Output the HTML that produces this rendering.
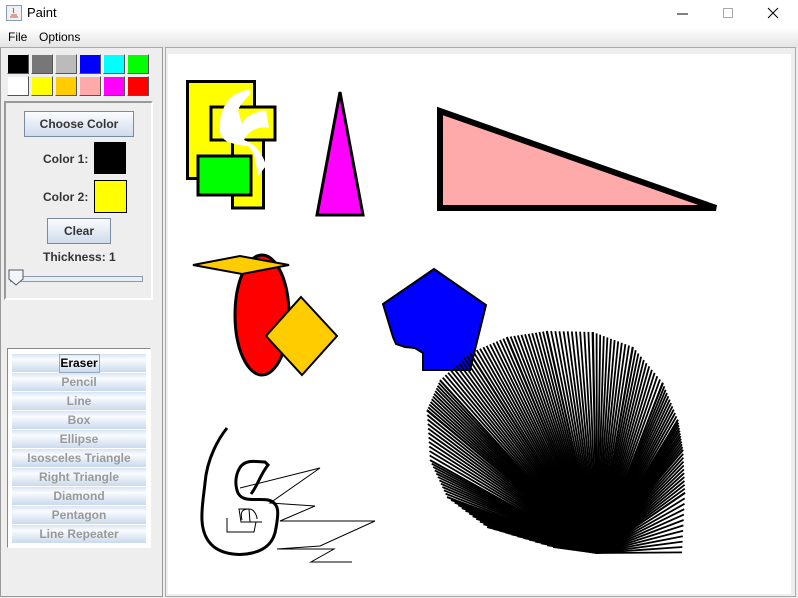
<!DOCTYPE html>
<html><head><meta charset="utf-8"><style>
body{margin:0;width:798px;height:598px;overflow:hidden;background:#eeeeee;font-family:"Liberation Sans",sans-serif;position:relative}
.a{position:absolute}
.title{left:0;top:0;width:798px;height:30px;background:#fff;border-bottom:0}
.menu{left:0;top:27px;width:798px;height:21px;background:linear-gradient(#fff,#e3e3e3)}
.sw{position:absolute;width:20px;height:18px;border:1px solid;border-color:#eee #555 #555 #eee}
.btn{position:absolute;background:linear-gradient(#fbfcfe,#cfdcec);border:1px solid #7a8aa0;font-size:12px;font-weight:bold;color:#333;text-align:center}
.tool{position:absolute;left:12px;width:134px;height:18px;background:linear-gradient(#d7e3f2,#fafcff 30%,#c9d9ec);font-size:12px;font-weight:bold;color:#999;text-align:center;line-height:18px}
.lbl{position:absolute;font-size:12px;font-weight:bold;color:#333}
</style></head><body>
<div class="a title"></div>
<svg class="a" style="left:6px;top:5px" width="16" height="16"><rect x="0.5" y="0.5" width="15" height="15" fill="#eef2f8" stroke="#8a9ab0"/><path d="M4 12h8M5 10h6M7 3c2 2-1 3 1 5" stroke="#d4502a" fill="none"/></svg>
<div class="a" style="left:27px;top:5px;font-size:13px;color:#000">Paint</div>
<svg class="a" style="left:670px;top:5px" width="120" height="18"><path d="M7 9h11" stroke="#000"/><rect x="53.5" y="3.5" width="9" height="9" fill="none" stroke="#aaa"/><path d="M98 3l10 10M108 3l-10 10" stroke="#000"/></svg>
<div class="a menu"></div>
<div class="a" style="left:8px;top:30px;font-size:12px">File</div>
<div class="a" style="left:39px;top:30px;font-size:12px">Options</div>
<div class="a" style="left:0;top:47px;width:163px;height:550px;border:1px solid #999;border-top:1px solid #aaa;box-sizing:border-box"></div>
<div class="a" style="left:165px;top:47px;width:631px;height:550px;border:1px solid #aaa;box-sizing:border-box"></div>
<div class="a" style="left:168px;top:54px;width:623px;height:540px;background:#fff"></div>
<div class="sw" style="left:7px;top:54px;background:#000"></div>
<div class="sw" style="left:31px;top:54px;background:#777"></div>
<div class="sw" style="left:55px;top:54px;background:#bbb"></div>
<div class="sw" style="left:79px;top:54px;background:#00f"></div>
<div class="sw" style="left:103px;top:54px;background:#0ff"></div>
<div class="sw" style="left:127px;top:54px;background:#0f0"></div>
<div class="sw" style="left:7px;top:76px;background:#fff"></div>
<div class="sw" style="left:31px;top:76px;background:#ff0"></div>
<div class="sw" style="left:55px;top:76px;background:#fc0"></div>
<div class="sw" style="left:79px;top:76px;background:#faa"></div>
<div class="sw" style="left:103px;top:76px;background:#f0f"></div>
<div class="sw" style="left:127px;top:76px;background:#f00"></div>
<div class="a" style="left:4px;top:101px;width:149px;height:199px;border:2px solid #999;border-right-color:#fff;border-bottom-color:#fff;box-sizing:border-box"></div>
<div class="btn" style="left:24px;top:111px;width:108px;height:24px;line-height:24px">Choose Color</div>
<div class="lbl" style="left:43px;top:152px">Color 1:</div>
<div class="a" style="left:94px;top:142px;width:32px;height:32px;background:#000"></div>
<div class="lbl" style="left:43px;top:190px">Color 2:</div>
<div class="a" style="left:94px;top:180px;background:#ff0;border:1px solid #000;box-sizing:border-box;width:33px;height:33px"></div>
<div class="btn" style="left:47px;top:218px;width:62px;height:24px;line-height:24px">Clear</div>
<div class="lbl" style="left:43px;top:250px">Thickness: 1</div>
<div class="a" style="left:10px;top:276px;width:131px;height:4px;border:1px solid #8a9ab0;background:#e8eef6"></div>
<svg class="a" style="left:8px;top:269px" width="18" height="18"><path d="M1 1h14v9l-7 6-7-6z" fill="#f2f6fa" stroke="#556"/></svg>
<div class="a" style="left:7px;top:348px;width:144px;height:200px;background:#fff;border:1px solid #888;border-right-color:#fff;border-bottom-color:#fff;box-sizing:border-box"></div>
<div class="tool" style="top:354px;color:#000">Eraser</div>
<div class="a" style="left:59px;top:354px;width:39px;height:17px;border:1px solid #9ab"></div>
<div class="tool" style="top:373px">Pencil</div>
<div class="tool" style="top:392px">Line</div>
<div class="tool" style="top:411px">Box</div>
<div class="tool" style="top:430px">Ellipse</div>
<div class="tool" style="top:449px">Isosceles Triangle</div>
<div class="tool" style="top:468px">Right Triangle</div>
<div class="tool" style="top:487px">Diamond</div>
<div class="tool" style="top:506px">Pentagon</div>
<div class="tool" style="top:525px">Line Repeater</div>
<svg class="a" style="left:0;top:0" width="798" height="598">
<rect x="187.5" y="81.5" width="67" height="97" fill="#ff0" stroke="#000" stroke-width="3"/>
<rect x="232.5" y="120" width="31" height="88" fill="#ff0" stroke="#000" stroke-width="3"/>
<rect x="211" y="107" width="64" height="33" fill="#ff0" stroke="#000" stroke-width="3"/>
<rect x="198" y="156" width="53" height="39" fill="#0f0" stroke="#000" stroke-width="3"/>
<path d="M250 90c-20 0-32 20-30 40 0 10 8 14 28 16 8 6 8 20 10 30l8-10c-2-10-10-22-22-26 6-12 18-14 25-12l-3-18c-8 2-20 4-24 14l-4-14c6-12 14-14 12-20z" fill="#fff"/>
<path d="M340 92l23 123h-46z" fill="#f0f" stroke="#000" stroke-width="3"/>
<path d="M440 111v97h276z" fill="#faa" stroke="#000" stroke-width="6"/>
<ellipse cx="262" cy="315" rx="27" ry="60" fill="#f00" stroke="#000" stroke-width="3"/>
<path d="M193 265l47-9 49 9-47 9z" fill="#fc0" stroke="#000" stroke-width="2"/>
<path d="M301 297l36 39-35 39-36-39z" fill="#fc0" stroke="#000" stroke-width="2"/>
<path d="M434 269l52 36-16 65h-47v-17l-8-5-10-1-9-3-3-7-10-33z" fill="#00f" stroke="#000" stroke-width="2"/>
<g id="fan" stroke="#000" stroke-width="1.8"></g>
<path d="M227 428c-8 10-20 30-22 55-2 20-8 45 5 60 10 12 30 13 42 10 13-3 22-10 24-25 2-12 5-25-8-28-10-2-25 3-30-7-4-10-2-20 3-27 7-7 15-4 24-4l3 3c-8 10-10 20-17 29" fill="none" stroke="#000" stroke-width="3"/>
<path d="M240 488l80-20-50 35 45 3-35 15 95 0-55 25-43 3h57l-23 13h41M227 518v14h27l2-10h-15l-2-13 10 0 1 13h12" fill="none" stroke="#000" stroke-width="1"/>
<path d="M242 520c-2-8 0-11 7-11 6 0 8 8 8 10" fill="none" stroke="#000"/>
</svg>
<script>
var pts=[[553,547],[487,527],[447,497],[430,460],[427,410],[440,380],[470,353],[507,337],[547,331],[593,332],[633,347],[663,383],[678,420],[683,450],[685,493],[682,553]];
var g=document.getElementById('fan'),s='';
for(var i=0;i<pts.length-1;i++){for(var t=0;t<1;t+=0.09){var x=pts[i][0]+(pts[i+1][0]-pts[i][0])*t,y=pts[i][1]+(pts[i+1][1]-pts[i][1])*t;s+='<line x1="597" y1="553" x2="'+x.toFixed(1)+'" y2="'+y.toFixed(1)+'"/>';}}
g.innerHTML=s;
</script>
</body></html>
